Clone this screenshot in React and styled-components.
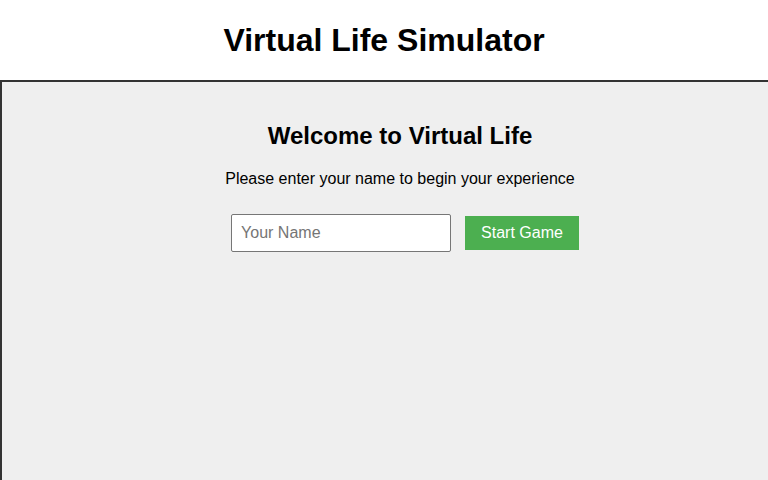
import React, { useState } from "react";
import styled, { createGlobalStyle } from "styled-components";

const GlobalStyle = createGlobalStyle`
  html, body {
    margin: 0;
    padding: 0;
    overflow: hidden;
    background: #ffffff;
    font-family: "Liberation Sans", Arial, sans-serif;
  }
`;

const Header = styled.header`
  background: #ffffff;
  text-align: center;
`;

const Title = styled.h1`
  margin: 0;
  padding: 21.6px 0;
  font-size: 32px;
  font-weight: bold;
  color: #000;
`;

const Panel = styled.main`
  width: 796px;
  min-height: 400px;
  border: 2px solid #333333;
  background: #efefef;
  padding: 20px 0;
  box-sizing: content-box;
  text-align: center;
`;

const Heading = styled.h2`
  margin: 20px 0;
  font-size: 24px;
  font-weight: bold;
  color: #000;
`;

const Lead = styled.p`
  margin: 16px 0;
  font-size: 16px;
  color: #000;
`;

const Row = styled.div`
  display: flex;
  justify-content: center;
  align-items: center;
  gap: 14px;
  margin-top: 26px;
  padding-left: 10px;
`;

const NameInput = styled.input`
  box-sizing: border-box;
  width: 220px;
  height: 38px;
  padding: 0 9px;
  border: 1px solid #767676;
  border-radius: 2px;
  background: #ffffff;
  font-family: "Liberation Sans", Arial, sans-serif;
  font-size: 16px;
  color: #000;
  outline: none;

  &::placeholder {
    color: #757575;
  }
`;

const StartButton = styled.button`
  box-sizing: border-box;
  height: 34px;
  padding: 0 16px;
  border: none;
  background: #4caf50;
  color: #ffffff;
  font-family: "Liberation Sans", Arial, sans-serif;
  font-size: 16px;
  cursor: pointer;
`;

export default function App() {
  const [name, setName] = useState("");
  return (
    <>
      <GlobalStyle />
      <Header>
        <Title>Virtual Life Simulator</Title>
      </Header>
      <Panel>
        <Heading>Welcome to Virtual Life</Heading>
        <Lead>Please enter your name to begin your experience</Lead>
        <Row>
          <NameInput
            type="text"
            placeholder="Your Name"
            value={name}
            onChange={(e) => setName(e.target.value)}
          />
          <StartButton type="button">Start Game</StartButton>
        </Row>
      </Panel>
    </>
  );
}
